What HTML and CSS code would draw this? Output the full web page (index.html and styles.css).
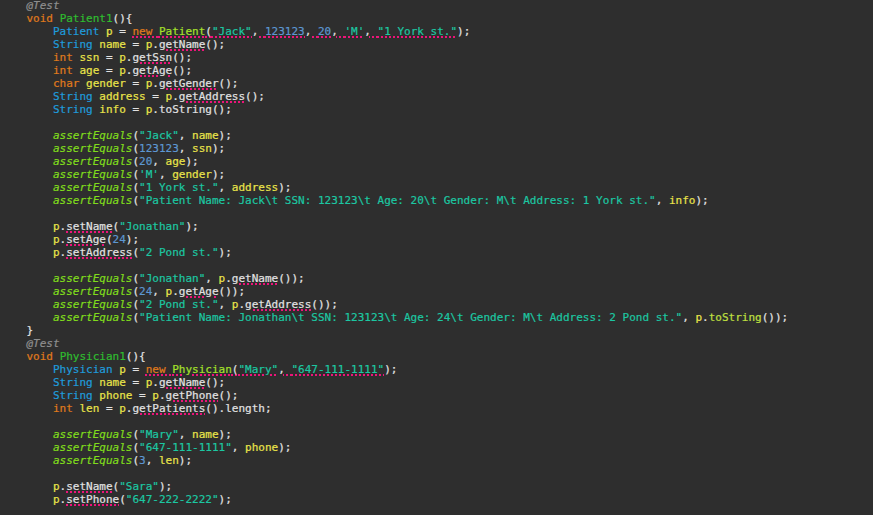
FILE: index.html
```
<!DOCTYPE html>
<html>
<head>
<meta charset="utf-8">
<link rel="stylesheet" href="styles.css">
</head>
<body>
<pre class="code">    <span class="an">@Test</span>
    <span class="kw">void</span> <span class="fn">Patient1</span>(){
        <span class="ty">Patient</span> <span class="va">p</span> = <span class="sq"><span class="kw">new</span> <span class="ct">Patient</span>(<span class="st">"Jack"</span>, <span class="nu">123123</span>, <span class="nu">20</span>, <span class="st">'M'</span>, <span class="st">"1 York st."</span></span>);
        <span class="ty">String</span> <span class="va">name</span> = <span class="va">p</span>.<span class="sq">getName</span>();
        <span class="kw">int</span> <span class="va">ssn</span> = <span class="va">p</span>.<span class="sq">getSsn</span>();
        <span class="kw">int</span> <span class="va">age</span> = <span class="va">p</span>.<span class="sq">getAge</span>();
        <span class="kw">char</span> <span class="va">gender</span> = <span class="va">p</span>.<span class="sq">getGender</span>();
        <span class="ty">String</span> <span class="va">address</span> = <span class="va">p</span>.<span class="sq">getAddress</span>();
        <span class="ty">String</span> <span class="va">info</span> = <span class="va">p</span>.toString();

        <span class="as">assertEquals</span>(<span class="st">"Jack"</span>, <span class="va">name</span>);
        <span class="as">assertEquals</span>(<span class="nu">123123</span>, <span class="va">ssn</span>);
        <span class="as">assertEquals</span>(<span class="nu">20</span>, <span class="va">age</span>);
        <span class="as">assertEquals</span>(<span class="st">'M'</span>, <span class="va">gender</span>);
        <span class="as">assertEquals</span>(<span class="st">"1 York st."</span>, <span class="va">address</span>);
        <span class="as">assertEquals</span>(<span class="st">"Patient Name: Jack\t SSN: 123123\t Age: 20\t Gender: M\t Address: 1 York st."</span>, <span class="va">info</span>);

        <span class="va">p</span>.<span class="sq">setName</span>(<span class="st">"Jonathan"</span>);
        <span class="va">p</span>.<span class="sq">setAge</span>(<span class="nu">24</span>);
        <span class="va">p</span>.<span class="sq">setAddress</span>(<span class="st">"2 Pond st."</span>);

        <span class="as">assertEquals</span>(<span class="st">"Jonathan"</span>, <span class="va">p</span>.<span class="sq">getName</span>());
        <span class="as">assertEquals</span>(<span class="nu">24</span>, <span class="va">p</span>.<span class="sq">getAge</span>());
        <span class="as">assertEquals</span>(<span class="st">"2 Pond st."</span>, <span class="va">p</span>.<span class="sq">getAddress</span>());
        <span class="as">assertEquals</span>(<span class="st">"Patient Name: Jonathan\t SSN: 123123\t Age: 24\t Gender: M\t Address: 2 Pond st."</span>, <span class="va">p</span>.<span class="lm">toString</span>());
    }
    <span class="an">@Test</span>
    <span class="kw">void</span> <span class="fn">Physician1</span>(){
        <span class="ty">Physician</span> <span class="va">p</span> = <span class="sq"><span class="kw">new</span> <span class="ct">Physician</span>(<span class="st">"Mary"</span>, <span class="st">"647-111-1111"</span></span>);
        <span class="ty">String</span> <span class="va">name</span> = <span class="va">p</span>.<span class="sq">getName</span>();
        <span class="ty">String</span> <span class="va">phone</span> = <span class="va">p</span>.<span class="sq">getPhone</span>();
        <span class="kw">int</span> <span class="va">len</span> = <span class="va">p</span>.<span class="sq">getPatients</span>().length;

        <span class="as">assertEquals</span>(<span class="st">"Mary"</span>, <span class="va">name</span>);
        <span class="as">assertEquals</span>(<span class="st">"647-111-1111"</span>, <span class="va">phone</span>);
        <span class="as">assertEquals</span>(<span class="nu">3</span>, <span class="va">len</span>);

        <span class="va">p</span>.<span class="sq">setName</span>(<span class="st">"Sara"</span>);
        <span class="va">p</span>.<span class="sq">setPhone</span>(<span class="st">"647-222-2222"</span>);
</pre>
</body>
</html>
```

FILE: styles.css
```
html, body {
  margin: 0;
  padding: 0;
  background: #2e2e2e;
  overflow: hidden;
}

.code {
  margin: -1px 0 0 0;
  padding: 0;
  font-family: "DejaVu Sans Mono", monospace;
  font-size: 11px;
  line-height: 13px;
  color: #e2e2e2;
  white-space: pre;
  -webkit-text-stroke: 0.2px currentColor;
}

.an { color: #8e8e8e; font-style: italic; }
.kw { color: #e07b1c; }
.fn { color: #2fbd2f; }
.ty { color: #1f9cdc; }
.va { color: #eae44a; }
.st { color: #1cc7a2; }
.nu { color: #5d97d2; }
.as { color: #80dc1c; font-style: italic; }
.ct { color: #a6e22a; }
.lm { color: #c0e040; }

.sq {
  text-decoration-line: underline;
  text-decoration-style: dotted;
  text-decoration-color: #ec1479;
  text-decoration-thickness: 2px;
  text-underline-offset: 1px;
}
```
